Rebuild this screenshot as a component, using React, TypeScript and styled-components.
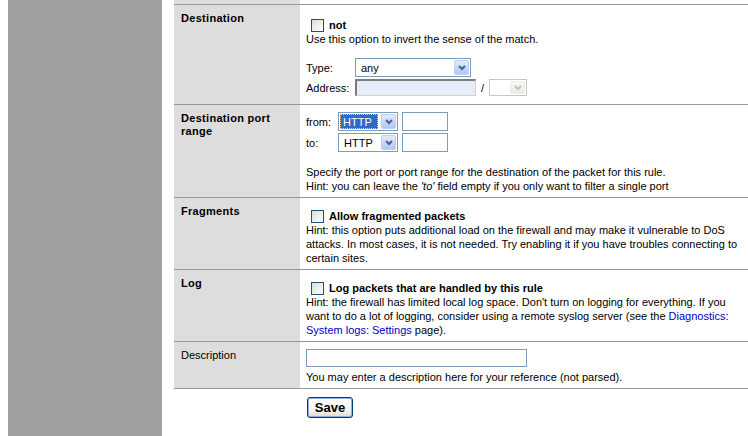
import React from 'react';
import styled, { createGlobalStyle } from 'styled-components';

const GlobalStyle = createGlobalStyle`
  html, body {
    margin: 0;
    padding: 0;
    background: #ffffff;
    overflow: hidden;
  }
  body {
    font-family: "Liberation Sans", Arial, sans-serif;
    font-size: 11px;
    color: #000000;
  }
`;

const Page = styled.div`
  display: flex;
  min-height: 100vh;
  padding-left: 8px;
`;

const Sidebar = styled.div`
  width: 154px;
  flex-shrink: 0;
  background: #a0a0a0;
`;

const Main = styled.div`
  flex: 1;
  min-width: 0;
  margin-left: 12px;
`;

const FormGrid = styled.div`
  display: grid;
  grid-template-columns: 126px 1fr;
`;

const LabelCell = styled.div<{ $required?: boolean; $stub?: boolean }>`
  background: #dddddd;
  border-bottom: 1px solid #999999;
  padding: ${(p) => (p.$stub ? '0' : '7px 20px 0 7px')};
  height: ${(p) => (p.$stub ? '4px' : 'auto')};
  font-weight: ${(p) => (p.$required ? 700 : 400)};
  line-height: 13px;
  letter-spacing: ${(p) => (p.$required ? '0.3px' : '0')};
`;

const ValueCell = styled.div<{ $stub?: boolean }>`
  border-bottom: 1px solid #999999;
  padding: ${(p) => (p.$stub ? '0' : '7px 6px 4px 6px')};
  height: ${(p) => (p.$stub ? '4px' : 'auto')};
  line-height: 14px;
  white-space: nowrap;
`;

const ButtonCell = styled.div`
  grid-column: 2;
  padding: 8px 7px;
`;

const CheckRow = styled.label<{ $gap?: number }>`
  display: flex;
  align-items: center;
  height: 14px;
  margin-top: ${(p) => p.$gap ?? 4}px;
  font-weight: 700;
`;

const CheckBox = styled.input`
  appearance: none;
  width: 13px;
  height: 13px;
  margin: 0 5px 0 5px;
  border: 1px solid #1c5180;
  background: linear-gradient(135deg, #dcdcd7 0%, #f2f2ef 60%, #ffffff 100%);
  box-sizing: border-box;
`;

const Text = styled.div<{ $gap?: number }>`
  margin-top: ${(p) => p.$gap ?? 0}px;
`;

const Link = styled.a`
  color: #0000cc;
  text-decoration: none;
`;

const AddrGrid = styled.div`
  display: grid;
  grid-template-columns: 49px auto;
  row-gap: 2px;
  align-items: center;
  justify-content: start;
  margin: 12px 0 4px;
`;

const PortGrid = styled.div`
  display: grid;
  grid-template-columns: 28px auto auto;
  grid-auto-rows: 19px;
  column-gap: 4px;
  row-gap: 2px;
  align-items: center;
  justify-content: start;
`;

const Inline = styled.div`
  display: flex;
  align-items: center;
  gap: 5px;
`;

const Combo = styled.div<{ $width: number; $height: number; $disabled?: boolean }>`
  display: flex;
  align-items: stretch;
  box-sizing: border-box;
  width: ${(p) => p.$width}px;
  height: ${(p) => p.$height}px;
  border: 1px solid ${(p) => (p.$disabled ? '#cac8bb' : '#7f9db9')};
  background: #ffffff;
  padding: 1px;
`;

const ComboText = styled.span<{ $selected?: boolean }>`
  display: flex;
  align-items: center;
  flex: ${(p) => (p.$selected ? '0 0 38px' : '1')};
  margin-right: ${(p) => (p.$selected ? 'auto' : '0')};
  padding-left: ${(p) => (p.$selected ? '3px' : '4px')};
  box-sizing: border-box;
  background: ${(p) => (p.$selected ? '#316ac5' : 'transparent')};
  color: ${(p) => (p.$selected ? '#ffffff' : '#000000')};
  outline: ${(p) => (p.$selected ? '1px dotted #e8d58a' : 'none')};
  outline-offset: -1px;
`;

const ComboArrow = styled.span<{ $disabled?: boolean }>`
  display: flex;
  align-items: center;
  justify-content: center;
  width: 15px;
  flex-shrink: 0;
  border-radius: 2px;
  box-sizing: border-box;
  border: 1px solid ${(p) => (p.$disabled ? '#eeede8' : '#bfd0f6')};
  background: ${(p) =>
    p.$disabled
      ? 'linear-gradient(#f7f7f4, #ebeae5)'
      : 'linear-gradient(#e3ebfe, #c3d4fb 60%, #b2c7f6)'};
`;

const Field = styled.input<{ $width: number; $height: number; $inset?: boolean }>`
  display: block;
  box-sizing: border-box;
  width: ${(p) => p.$width}px;
  height: ${(p) => p.$height}px;
  margin: 0;
  padding: 1px 2px;
  font: inherit;
  background: ${(p) => (p.$inset ? '#e6ecf8' : '#ffffff')};
  border: 1px solid #7f9db9;
  ${(p) =>
    p.$inset &&
    `
    border-top: 2px solid #7c7c7c;
    border-left: 2px solid #7c7c7c;
    border-right: 1px solid #d6d3cb;
    border-bottom: 1px solid #d6d3cb;
  `}
`;

const SaveButton = styled.button`
  box-sizing: border-box;
  width: 46px;
  height: 21px;
  padding: 0;
  font-family: "Liberation Sans", Arial, sans-serif;
  font-size: 13px;
  font-weight: 700;
  color: #000000;
  border: 1px solid #003c74;
  border-radius: 3px;
  background: linear-gradient(#ffffff, #f3f2ec 70%, #dcd8cc);
  box-shadow: inset 0 0 0 1px #8eb0ea;
`;

const Chevron: React.FC<{ color: string }> = ({ color }) => (
  <svg width="8" height="6" viewBox="0 0 8 6">
    <polyline points="1,1 4,4 7,1" fill="none" stroke={color} strokeWidth="2" />
  </svg>
);

interface SelectProps {
  value?: string;
  width: number;
  height: number;
  selected?: boolean;
  disabled?: boolean;
}

const Select: React.FC<SelectProps> = ({ value = '', width, height, selected, disabled }) => (
  <Combo $width={width} $height={height} $disabled={disabled}>
    <ComboText $selected={selected}>{value}</ComboText>
    <ComboArrow $disabled={disabled}>
      <Chevron color={disabled ? '#c3c3bd' : '#4d6185'} />
    </ComboArrow>
  </Combo>
);

const App: React.FC = () => {
  return (
    <>
      <GlobalStyle />
      <Page>
        <Sidebar />
        <Main>
          <FormGrid>
            <LabelCell $stub />
            <ValueCell $stub />

            <LabelCell $required>Destination</LabelCell>
            <ValueCell>
              <CheckRow $gap={6}>
                <CheckBox type="checkbox" />
                not
              </CheckRow>
              <Text>Use this option to invert the sense of the match.</Text>
              <AddrGrid>
                <span>Type:</span>
                <Select value="any" width={116} height={19} />
                <span>Address:</span>
                <Inline>
                  <Field $width={121} $height={17} $inset />
                  <span>/</span>
                  <Select width={38} height={17} disabled />
                </Inline>
              </AddrGrid>
            </ValueCell>

            <LabelCell $required>Destination port range</LabelCell>
            <ValueCell>
              <PortGrid>
                <span>from:</span>
                <Select value="HTTP" width={60} height={19} selected />
                <Field $width={46} $height={19} />
                <span>to:</span>
                <Select value="HTTP" width={60} height={19} />
                <Field $width={46} $height={19} />
              </PortGrid>
              <Text $gap={13}>
                Specify the port or port range for the destination of the packet for this rule.
                <br />
                Hint: you can leave the <em>'to'</em> field empty if you only want to filter a single port
              </Text>
            </ValueCell>

            <LabelCell $required>Fragments</LabelCell>
            <ValueCell>
              <CheckRow>
                <CheckBox type="checkbox" />
                Allow fragmented packets
              </CheckRow>
              <Text>
                Hint: this option puts additional load on the firewall and may make it vulnerable to DoS
                <br />
                attacks. In most cases, it is not needed. Try enabling it if you have troubles connecting to
                <br />
                certain sites.
              </Text>
            </ValueCell>

            <LabelCell $required>Log</LabelCell>
            <ValueCell>
              <CheckRow>
                <CheckBox type="checkbox" />
                Log packets that are handled by this rule
              </CheckRow>
              <Text>
                Hint: the firewall has limited local log space. Don't turn on logging for everything. If you
                <br />
                want to do a lot of logging, consider using a remote syslog server (see the{' '}
                <Link href="#">
                  Diagnostics:
                  <br />
                  System logs: Settings
                </Link>{' '}
                page).
              </Text>
            </ValueCell>

            <LabelCell>Description</LabelCell>
            <ValueCell>
              <Field $width={221} $height={18} />
              <Text $gap={3}>You may enter a description here for your reference (not parsed).</Text>
            </ValueCell>

            <ButtonCell>
              <SaveButton type="button">Save</SaveButton>
            </ButtonCell>
          </FormGrid>
        </Main>
      </Page>
    </>
  );
};

export default App;
